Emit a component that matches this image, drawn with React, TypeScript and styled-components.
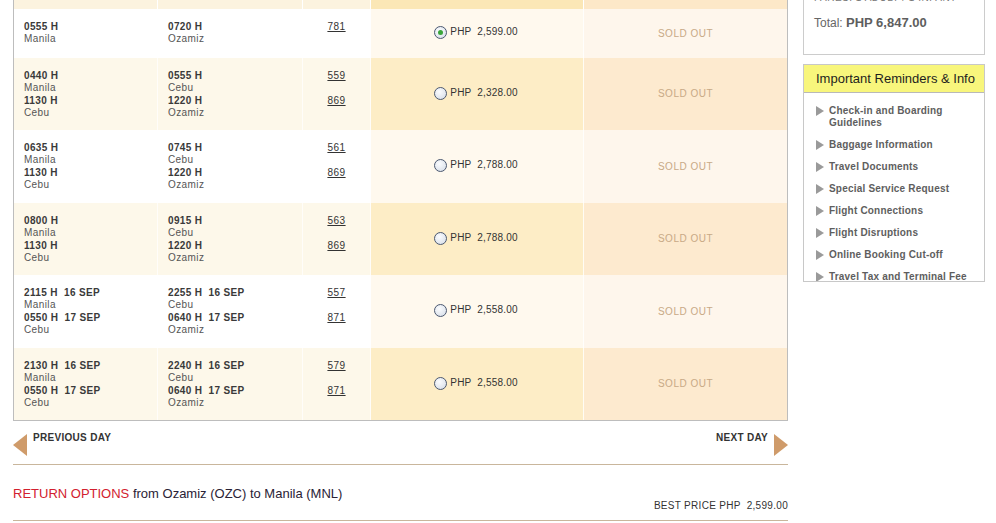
import React from 'react';
import styled, { createGlobalStyle } from 'styled-components';

const GlobalStyle = createGlobalStyle`
  body {
    margin: 0;
    background: #fff;
    font-family: "Liberation Sans", Arial, sans-serif;
    overflow: hidden;
  }
`;

const Page = styled.div`
  display: flex;
  align-items: flex-start;
  margin-top: -16px;
  padding-left: 13px;
`;

const MainColumn = styled.div`
  width: 775px;
  flex-shrink: 0;
`;

const FlightTable = styled.table`
  width: 775px;
  box-sizing: border-box;
  border-collapse: separate;
  border-spacing: 0;
  table-layout: fixed;
  border-left: 1px solid #bdbdbd;
  border-right: 1px solid #bdbdbd;
  border-bottom: 1px solid #bdbdbd;
`;

const HeadCell = styled.th<{ $bg: string; $w: number }>`
  box-sizing: border-box;
  width: ${p => p.$w}px;
  height: 25px;
  padding: 0;
  background: ${p => p.$bg};
  border-right: 1px solid #fff;
  font-size: 10px;
  font-weight: bold;
  color: #333;
  letter-spacing: 0.5px;
  text-align: center;
  vertical-align: middle;

  &:last-child {
    border-right: none;
  }
`;

const Row = styled.tr<{ $h: number }>`
  height: ${p => p.$h}px;
`;

const Cell = styled.td<{ $bg: string }>`
  box-sizing: border-box;
  background: ${p => p.$bg};
  border-right: 1px solid rgba(255, 255, 255, 0.7);
  padding: 11px 10px 0;
  vertical-align: top;
  font-size: 10px;
  color: #333;
`;

const FareCell = styled.td<{ $bg: string }>`
  box-sizing: border-box;
  background: ${p => p.$bg};
  border-right: 1px solid rgba(255, 255, 255, 0.8);
  text-align: center;
  vertical-align: middle;
  padding: 0;

  &:last-child {
    border-right: none;
  }
`;

const Segment = styled.div`
  height: 25px;
`;

const Time = styled.div`
  font-weight: bold;
  letter-spacing: 0.35px;
  line-height: 13px;
  color: #3a3a3a;
  white-space: pre;
`;

const City = styled.div`
  line-height: 12px;
  letter-spacing: 0.4px;
  color: #555;
`;

const FlightLink = styled.a`
  display: block;
  height: 25px;
  line-height: 13px;
  text-align: center;
  color: #333;
  font-size: 10px;
  letter-spacing: 0.5px;
  text-decoration: underline;
`;

const FareLabel = styled.label`
  display: inline-flex;
  align-items: center;
  gap: 3px;
  font-size: 10px;
  color: #333;
  letter-spacing: 0.2px;
  white-space: pre;
  margin-right: 2px;
`;

const Radio = styled.span<{ $checked?: boolean }>`
  position: relative;
  display: inline-block;
  width: 11px;
  height: 11px;
  border-radius: 50%;
  border: 1px solid #4b5870;
  background: radial-gradient(circle at 40% 35%, #fbfcfe, #d3dbe6);
  margin-top: 2px;

  &::after {
    content: '';
    display: ${p => (p.$checked ? 'block' : 'none')};
    position: absolute;
    left: 3px;
    top: 3px;
    width: 5px;
    height: 5px;
    border-radius: 50%;
    background: #3aa53a;
  }
`;

const SoldOut = styled.span`
  display: block;
  line-height: 10px;
  font-size: 10px;
  letter-spacing: 0.5px;
  color: #c8a986;
`;

const NavBar = styled.div`
  display: flex;
  justify-content: space-between;
  align-items: flex-start;
  height: 44px;
  border-bottom: 1px solid #c9b69c;
  padding-top: 12px;
  box-sizing: border-box;
`;

const NavLink = styled.a<{ $dir: 'left' | 'right' }>`
  display: flex;
  flex-direction: ${p => (p.$dir === 'left' ? 'row' : 'row-reverse')};
  align-items: flex-start;
  gap: 6px;
  font-size: 10px;
  font-weight: bold;
  color: #333;
  letter-spacing: 0.3px;
  line-height: 10px;
  text-decoration: none;
`;

const Arrow = styled.span<{ $dir: 'left' | 'right' }>`
  width: 0;
  height: 0;
  margin-top: 1px;
  border-top: 11px solid transparent;
  border-bottom: 11px solid transparent;
  ${p =>
    p.$dir === 'left'
      ? 'border-right: 14px solid #cf9b6a;'
      : 'border-left: 14px solid #cf9b6a;'}
`;

const ReturnSection = styled.div`
  height: 56px;
  border-bottom: 1px solid #c9b69c;
  padding-top: 21px;
  box-sizing: border-box;
`;

const ReturnTitle = styled.div`
  font-size: 13px;
  color: #2a2235;
  line-height: 16px;

  strong {
    font-weight: normal;
    color: #d2202e;
  }
`;

const BestPrice = styled.div`
  text-align: right;
  font-size: 10px;
  color: #333;
  letter-spacing: 0.3px;
  margin-top: -2px;
  white-space: pre;
`;

const Sidebar = styled.div`
  width: 182px;
  margin-left: 15px;
  flex-shrink: 0;
`;

const TotalBox = styled.div`
  border: 1px solid #cccccc;
  padding: 6px 10px 22px;
`;

const PassengerLine = styled.div`
  font-size: 10px;
  line-height: 14px;
  color: #777;
  letter-spacing: 0.5px;
`;

const TotalLine = styled.div`
  margin-top: 9px;
  font-size: 12px;
  line-height: 18px;
  color: #666;

  b {
    font-size: 13px;
    color: #5e5e5e;
  }
`;

const InfoBox = styled.div`
  margin-top: 9px;
  border: 1px solid #c8c8c8;
  height: 216px;
  overflow: hidden;
`;

const InfoHeader = styled.div`
  background: #f8f67c;
  border-bottom: 1px solid #b9b9b9;
  height: 27px;
  line-height: 27px;
  padding-left: 12px;
  font-size: 13px;
  color: #1e1e1e;
`;

const InfoList = styled.ul`
  list-style: none;
  margin: 0;
  padding: 7px 0 0 12px;
`;

const InfoItem = styled.li`
  display: flex;
  align-items: flex-start;
  gap: 5px;
  padding: 5px 0;
  font-size: 10px;
  font-weight: bold;
  line-height: 12px;
  letter-spacing: 0.2px;
  color: #5e5e5e;

  &::before {
    content: '';
    flex-shrink: 0;
    margin-top: 1px;
    width: 0;
    height: 0;
    border-top: 5px solid transparent;
    border-bottom: 5px solid transparent;
    border-left: 8px solid #9a9a9a;
  }
`;

type Leg = { time: string; city: string };
type Option = {
  from: Leg[];
  to: Leg[];
  flights: string[];
  fare: string;
  checked?: boolean;
  h: number;
};

const options: Option[] = [
  {
    from: [{ time: '0555 H', city: 'Manila' }],
    to: [{ time: '0720 H', city: 'Ozamiz' }],
    flights: ['781'],
    fare: '2,599.00',
    checked: true,
    h: 49,
  },
  {
    from: [
      { time: '0440 H', city: 'Manila' },
      { time: '1130 H', city: 'Cebu' },
    ],
    to: [
      { time: '0555 H', city: 'Cebu' },
      { time: '1220 H', city: 'Ozamiz' },
    ],
    flights: ['559', '869'],
    fare: '2,328.00',
    h: 72,
  },
  {
    from: [
      { time: '0635 H', city: 'Manila' },
      { time: '1130 H', city: 'Cebu' },
    ],
    to: [
      { time: '0745 H', city: 'Cebu' },
      { time: '1220 H', city: 'Ozamiz' },
    ],
    flights: ['561', '869'],
    fare: '2,788.00',
    h: 73,
  },
  {
    from: [
      { time: '0800 H', city: 'Manila' },
      { time: '1130 H', city: 'Cebu' },
    ],
    to: [
      { time: '0915 H', city: 'Cebu' },
      { time: '1220 H', city: 'Ozamiz' },
    ],
    flights: ['563', '869'],
    fare: '2,788.00',
    h: 72,
  },
  {
    from: [
      { time: '2115 H  16 SEP', city: 'Manila' },
      { time: '0550 H  17 SEP', city: 'Cebu' },
    ],
    to: [
      { time: '2255 H  16 SEP', city: 'Cebu' },
      { time: '0640 H  17 SEP', city: 'Ozamiz' },
    ],
    flights: ['557', '871'],
    fare: '2,558.00',
    h: 73,
  },
  {
    from: [
      { time: '2130 H  16 SEP', city: 'Manila' },
      { time: '0550 H  17 SEP', city: 'Cebu' },
    ],
    to: [
      { time: '2240 H  16 SEP', city: 'Cebu' },
      { time: '0640 H  17 SEP', city: 'Ozamiz' },
    ],
    flights: ['579', '871'],
    fare: '2,558.00',
    h: 72,
  },
];

const palette = {
  odd: { base: '#ffffff', regular: '#fff9ee', promo: '#fef6ec' },
  even: { base: '#fdf8ea', regular: '#fdedc6', promo: '#fdeacf' },
};

const reminders = [
  'Check-in and Boarding Guidelines',
  'Baggage Information',
  'Travel Documents',
  'Special Service Request',
  'Flight Connections',
  'Flight Disruptions',
  'Online Booking Cut-off',
  'Travel Tax and Terminal Fee',
];

function Legs({ legs }: { legs: Leg[] }) {
  return (
    <>
      {legs.map((l, i) => (
        <Segment key={i}>
          <Time>{l.time}</Time>
          <City>{l.city}</City>
        </Segment>
      ))}
    </>
  );
}

export default function App() {
  return (
    <>
      <GlobalStyle />
      <Page>
        <MainColumn>
          <FlightTable>
            <thead>
              <tr>
                <HeadCell $bg="#fcf3df" $w={144}>FROM</HeadCell>
                <HeadCell $bg="#fcf3df" $w={145}>TO</HeadCell>
                <HeadCell $bg="#fcf3df" $w={68}>FLIGHT</HeadCell>
                <HeadCell $bg="#fbe7b6" $w={213}>REGULAR FARES</HeadCell>
                <HeadCell $bg="#fde8c8" $w={203}>PROMO FARES</HeadCell>
              </tr>
            </thead>
            <tbody>
              {options.map((o, i) => {
                const c = i % 2 === 0 ? palette.odd : palette.even;
                return (
                  <Row key={i} $h={o.h}>
                    <Cell $bg={c.base}>
                      <Legs legs={o.from} />
                    </Cell>
                    <Cell $bg={c.base}>
                      <Legs legs={o.to} />
                    </Cell>
                    <Cell $bg={c.base}>
                      {o.flights.map(f => (
                        <FlightLink key={f} href="#">{f}</FlightLink>
                      ))}
                    </Cell>
                    <FareCell $bg={c.regular}>
                      <FareLabel>
                        <Radio $checked={o.checked} />
                        {`PHP  ${o.fare}`}
                      </FareLabel>
                    </FareCell>
                    <FareCell $bg={c.promo}>
                      <SoldOut>SOLD OUT</SoldOut>
                    </FareCell>
                  </Row>
                );
              })}
            </tbody>
          </FlightTable>

          <NavBar>
            <NavLink $dir="left" href="#">
              <Arrow $dir="left" />
              <span>PREVIOUS DAY</span>
            </NavLink>
            <NavLink $dir="right" href="#">
              <Arrow $dir="right" />
              <span>NEXT DAY</span>
            </NavLink>
          </NavBar>

          <ReturnSection>
            <ReturnTitle>
              <strong>RETURN OPTIONS</strong> from Ozamiz (OZC) to Manila (MNL)
            </ReturnTitle>
            <BestPrice>{'BEST PRICE PHP  2,599.00'}</BestPrice>
          </ReturnSection>
        </MainColumn>

        <Sidebar>
          <TotalBox>
            <PassengerLine>FARES: 1 ADULT / 1 INFANT</PassengerLine>
            <TotalLine>
              Total: <b>PHP 6,847.00</b>
            </TotalLine>
          </TotalBox>
          <InfoBox>
            <InfoHeader>Important Reminders &amp; Info</InfoHeader>
            <InfoList>
              {reminders.map(r => (
                <InfoItem key={r}>{r}</InfoItem>
              ))}
            </InfoList>
          </InfoBox>
        </Sidebar>
      </Page>
    </>
  );
}
